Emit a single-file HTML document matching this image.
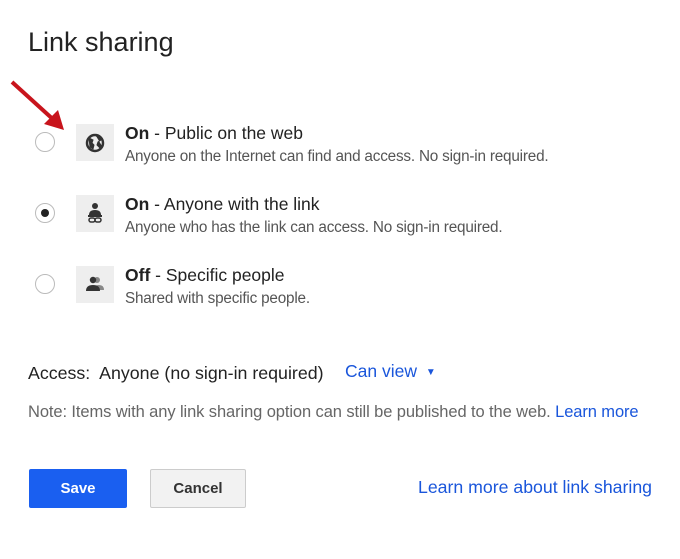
<!DOCTYPE html>
<html><head><style>
body{margin:0;width:680px;height:559px;background:#fff;font-family:"Liberation Sans",Arial,sans-serif;position:relative;overflow:hidden;color:#222}
.a{position:absolute;white-space:nowrap}
.radio{position:absolute;left:35px;width:20px;height:20px;border:1px solid #bbb;border-radius:50%;box-sizing:border-box;background:#fff}
.radio.on::after{content:"";position:absolute;left:5px;top:5px;width:8px;height:8px;border-radius:50%;background:#222}
.ib{position:absolute;left:76px;width:38px;height:37px;background:#eee}
.t{font-size:17.5px;color:#222}
.s{font-size:15.3px;color:#555;letter-spacing:-0.2px}
</style></head><body>
<div class="a" style="left:28px;top:27px;font-size:27px;color:#222">Link sharing</div>
<svg class="a" style="left:0;top:70px" width="80" height="70"><line x1="12" y1="12" x2="56" y2="52" stroke="#c8141c" stroke-width="4"/><polygon points="64,60 44,54 58,40" fill="#c8141c"/></svg>

<div class="radio" style="top:132px"></div>
<div class="ib" style="top:124px"><svg width="38" height="37" viewBox="0 0 38 37"><circle cx="19" cy="19" r="8" fill="none" stroke="#333" stroke-width="2.5"/><path d="M13 14l4 2 -1 3 2 2 -1 4 -3-2z M20 12l3 1 2 3 -3 2 -1 3 3 3 2-2" fill="#333" stroke="#333"/></svg></div>
<div class="a t" style="left:125px;top:123px"><b>On</b> - Public on the web</div>
<div class="a s" style="left:125px;top:148px">Anyone on the Internet can find and access. No sign-in required.</div>

<div class="radio on" style="top:203px"></div>
<div class="ib" style="top:195px"><svg width="38" height="37" viewBox="0 0 38 37"><circle cx="19" cy="11" r="3" fill="#333"/><path d="M13 20q0-5 6-5q6 0 6 5z" fill="#333"/><rect x="12" y="20" width="14" height="2" fill="#333"/><rect x="13" y="23" width="6" height="4" rx="2" fill="none" stroke="#333" stroke-width="1.5"/><rect x="19" y="23" width="6" height="4" rx="2" fill="none" stroke="#333" stroke-width="1.5"/></svg></div>
<div class="a t" style="left:125px;top:194px"><b>On</b> - Anyone with the link</div>
<div class="a s" style="left:125px;top:219px">Anyone who has the link can access. No sign-in required.</div>

<div class="radio" style="top:274px"></div>
<div class="ib" style="top:266px"><svg width="38" height="37" viewBox="0 0 38 37"><circle cx="21" cy="14" r="3" fill="#888"/><path d="M17 24q0-5 6-5q5 0 5 5z" fill="#888"/><circle cx="17" cy="14" r="3.2" fill="#333"/><path d="M10 25q0-6 7-6q7 0 7 6z" fill="#333"/></svg></div>
<div class="a t" style="left:125px;top:265px"><b>Off</b> - Specific people</div>
<div class="a s" style="left:125px;top:290px">Shared with specific people.</div>

<div class="a" style="left:28px;top:363px;font-size:17.8px;color:#222">Access:&nbsp; Anyone (no sign-in required)</div>
<div class="a" style="left:345px;top:361px;font-size:17.5px;color:#1a56db">Can view <span style="font-size:10px;position:relative;top:-2px;margin-left:4px">▼</span></div>
<div class="a" style="left:28px;top:403px;font-size:16.5px;color:#666;letter-spacing:-0.1px">Note: Items with any link sharing option can still be published to the web. <span style="color:#1a56db">Learn more</span></div>

<div class="a" style="left:29px;top:469px;width:98px;height:39px;background:#1a5ff0;border-radius:2px;color:#fff;font-weight:bold;font-size:15px;line-height:39px;text-align:center">Save</div>
<div class="a" style="left:150px;top:469px;width:96px;height:39px;background:#f2f2f2;border:1px solid #ccc;box-sizing:border-box;border-radius:2px;color:#333;font-weight:bold;font-size:15px;line-height:37px;text-align:center">Cancel</div>
<div class="a" style="left:418px;top:477px;font-size:17.7px;color:#1a56db">Learn more about link sharing</div>
</body></html>
